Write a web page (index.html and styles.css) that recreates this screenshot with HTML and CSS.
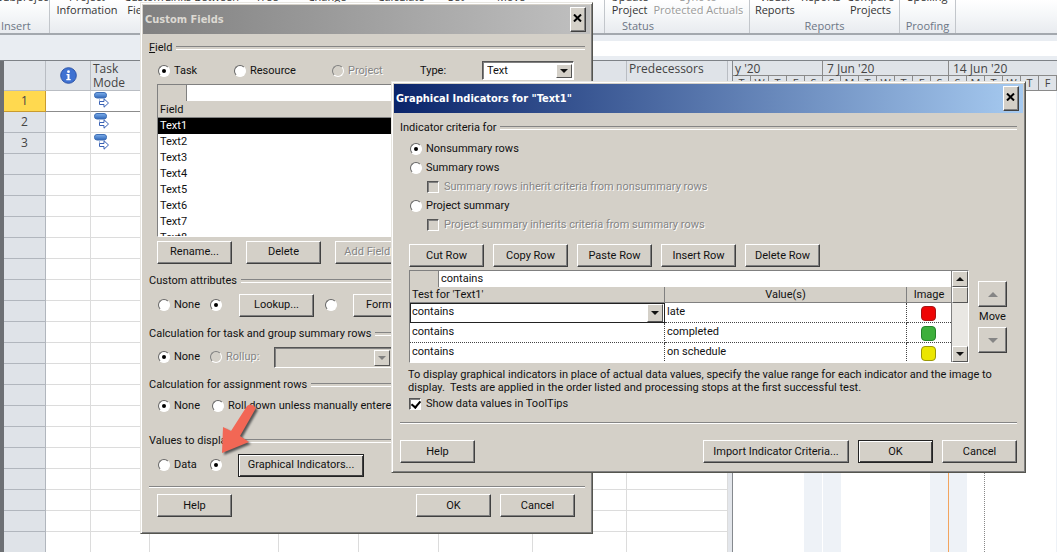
FILE: index.html
```html
<!DOCTYPE html>
<html lang="en">
<head>
<meta charset="utf-8">
<title>Project - Custom Fields</title>
<link rel="stylesheet" href="styles.css">
</head>
<body>
<svg class="defs" width="0" height="0" aria-hidden="true">
  <defs>
    <linearGradient id="pill" x1="0" y1="0" x2="0" y2="1"><stop offset="0" stop-color="#7fb0ec"/><stop offset="1" stop-color="#2f66b8"/></linearGradient>
    <symbol id="auto" viewBox="0 0 16 16">
      <rect x=".5" y=".5" width="12" height="5.500" rx="2.500" fill="url(#pill)" stroke="#3f6fb5"/>
      <path d="M5.500 7v4" fill="none" stroke="#a9bbdd"/>
      <path d="M5.500 9.500h4.500v-2.700l4.500 4.200-4.500 4.200v-2.700h-4.500z" fill="#fff" stroke="#3a62b5"/>
    </symbol>
    <symbol id="cross" viewBox="0 0 9 8"><path d="M1 .5L8 7.500M8 .5L1 7.500" fill="none" stroke="#000" stroke-width="2"/></symbol>
    <symbol id="down" viewBox="0 0 8 4"><path d="M0 0h8l-4 4z"/></symbol>
    <symbol id="up" viewBox="0 0 8 4"><path d="M0 4h8l-4-4z"/></symbol>
  </defs>
</svg>
<main class="app">
  <header class="ribbon">
    <section class="group insert"><div class="items"><span class="item">Subproject<br>&nbsp;</span></div><h2>Insert</h2></section>
    <section class="group properties">
      <div class="items">
        <span class="item w74">Project<br>Information</span><span class="item w36">Custom<br>Fields</span><span class="item w84">Links Between<br>Projects</span><span class="item w46">Tree</span><span class="item w74">Change</span><span class="item w74">Calculate</span><span class="item w36">Set</span><span class="item w74">Move</span>
      </div><h2>&nbsp;</h2>
    </section>
    <section class="group status"><div class="items"><span class="item">Update<br>Project</span><span class="item off">Sync to<br>Protected Actuals</span></div><h2>Status</h2></section>
    <section class="group reports"><div class="items"><span class="item">Visual<br>Reports</span><span class="item">Reports<br>&nbsp;</span><span class="item">Compare<br>Projects</span></div><h2>Reports</h2></section>
    <section class="group proofing"><div class="items"><span class="item">Spelling<br>&nbsp;</span></div><h2>Proofing</h2></section>
  </header>
  <div class="formula"><div class="formula-field"></div></div>
  <div class="view">
    <table class="sheet">
      <colgroup><col class="c-id"><col class="c-info"><col class="c-mode"><col class="c-name"><col class="c-dur"><col class="c-dur"><col class="c-date"><col class="c-date"><col class="c-pred"></colgroup>
      <thead><tr><th></th><th class="info"><svg width="17" height="17" viewBox="0 0 17 17" role="img" aria-label="Indicators"><circle cx="8.500" cy="8.500" r="7.800" fill="#3f72d2" stroke="#2e55a8"/><circle cx="8.500" cy="4.700" r="1.400" fill="#fff"/><path d="M6.500 7h3v5h1.200v1.200h-4.400v-1.200h1.200v-3.800h-1z" fill="#fff"/></svg></th><th>Task Mode</th><th></th><th></th><th></th><th></th><th></th><th>Predecessors</th></tr></thead>
      <tbody>
        <tr class="current"><th>1</th><td></td><td><svg width="16" height="16"><use href="#auto"/></svg></td><td></td><td></td><td></td><td></td><td></td><td></td></tr>
        <tr><th>2</th><td></td><td><svg width="16" height="16"><use href="#auto"/></svg></td><td></td><td></td><td></td><td></td><td></td><td></td></tr>
        <tr><th>3</th><td></td><td><svg width="16" height="16"><use href="#auto"/></svg></td><td></td><td></td><td></td><td></td><td></td><td></td></tr>
        <tr><th></th><td></td><td></td><td></td><td></td><td></td><td></td><td></td><td></td></tr>
        <tr><th></th><td></td><td></td><td></td><td></td><td></td><td></td><td></td><td></td></tr>
        <tr><th></th><td></td><td></td><td></td><td></td><td></td><td></td><td></td><td></td></tr>
        <tr><th></th><td></td><td></td><td></td><td></td><td></td><td></td><td></td><td></td></tr>
        <tr><th></th><td></td><td></td><td></td><td></td><td></td><td></td><td></td><td></td></tr>
        <tr><th></th><td></td><td></td><td></td><td></td><td></td><td></td><td></td><td></td></tr>
        <tr><th></th><td></td><td></td><td></td><td></td><td></td><td></td><td></td><td></td></tr>
        <tr><th></th><td></td><td></td><td></td><td></td><td></td><td></td><td></td><td></td></tr>
        <tr><th></th><td></td><td></td><td></td><td></td><td></td><td></td><td></td><td></td></tr>
        <tr><th></th><td></td><td></td><td></td><td></td><td></td><td></td><td></td><td></td></tr>
        <tr><th></th><td></td><td></td><td></td><td></td><td></td><td></td><td></td><td></td></tr>
        <tr><th></th><td></td><td></td><td></td><td></td><td></td><td></td><td></td><td></td></tr>
        <tr><th></th><td></td><td></td><td></td><td></td><td></td><td></td><td></td><td></td></tr>
        <tr><th></th><td></td><td></td><td></td><td></td><td></td><td></td><td></td><td></td></tr>
        <tr><th></th><td></td><td></td><td></td><td></td><td></td><td></td><td></td><td></td></tr>
        <tr><th></th><td></td><td></td><td></td><td></td><td></td><td></td><td></td><td></td></tr>
        <tr><th></th><td></td><td></td><td></td><td></td><td></td><td></td><td></td><td></td></tr>
        <tr><th></th><td></td><td></td><td></td><td></td><td></td><td></td><td></td><td></td></tr>
        <tr><th></th><td></td><td></td><td></td><td></td><td></td><td></td><td></td><td></td></tr>
      </tbody>
    </table>
    <div class="splitter"></div>
    <section class="gantt">
      <div class="weeks"><span class="part">y '20</span><span>7 Jun '20</span><span>14 Jun '20</span></div>
      <div class="days"><span>T</span><span>W</span><span>T</span><span>F</span><span>S</span><span>S</span><span>M</span><span>T</span><span>W</span><span>T</span><span>F</span><span>S</span><span>S</span><span>M</span><span>T</span><span>W</span><span>T</span><span>F</span></div>
      <div class="chart"><div class="start-line"></div><div class="today-line"></div></div>
    </section>
  </div>
</main>

<section class="dialog fields" aria-labelledby="t1">
  <div class="title"><h1 id="t1">Custom Fields</h1><button class="close" aria-label="Close"><svg width="9" height="8"><use href="#cross"/></svg></button></div>
  <div class="content">
    <h2 class="rule"><span><u>F</u>ield</span></h2>
    <div class="line types">
      <label class="w76"><input type="radio" name="kind" checked>Task</label>
      <label class="w98"><input type="radio" name="kind">Resource</label>
      <label class="w84 off"><input type="radio" name="kind" disabled>Project</label>
      <label class="type-label" for="type">Type:</label>
      <span class="combo type"><select id="type"><option>Text</option></select><i><svg width="8" height="4"><use href="#down"/></svg></i></span>
    </div>
    <div class="list">
      <div class="entry"><b></b><input type="text" aria-label="Field entry"></div>
      <div class="list-head">Field</div>
      <ul><li class="selected">Text1</li><li>Text2</li><li>Text3</li><li>Text4</li><li>Text5</li><li>Text6</li><li>Text7</li><li>Text8</li></ul>
    </div>
    <div class="line list-buttons"><button class="btn">Rename...</button><button class="btn">Delete</button><button class="btn wide" disabled>Add Field to Enterprise...</button></div>
    <h2 class="rule">Custom attributes</h2>
    <div class="line attributes"><label class="w52"><input type="radio" name="attr">None</label><input type="radio" name="attr" aria-label="Lookup" checked><button class="btn lookup">Lookup...</button><input type="radio" name="attr" aria-label="Formula"><button class="btn formula-button">Formula...</button></div>
    <h2 class="rule">Calculation for task and group summary rows</h2>
    <div class="line calc"><label class="w52"><input type="radio" name="calc" checked>None</label><label class="off w62"><input type="radio" name="calc" disabled>Rollup:</label><span class="combo rollup"><select aria-label="Rollup" disabled><option></option></select><i><svg width="8" height="4"><use href="#down"/></svg></i></span></div>
    <h2 class="rule">Calculation for assignment rows</h2>
    <div class="line assign"><label class="w52"><input type="radio" name="assign" checked>None</label><label><input type="radio" name="assign">Roll down unless manually entered</label></div>
    <h2 class="rule">Values to display</h2>
    <div class="line values"><label class="w52"><input type="radio" name="val">Data</label><input type="radio" name="val" aria-label="Graphical indicators" checked><button class="btn default indicators">Graphical Indicators...</button></div>
    <hr>
    <footer class="actions"><button class="btn">Help</button><span></span><button class="btn">OK</button><button class="btn">Cancel</button></footer>
  </div>
</section>

<section class="dialog graphical" aria-labelledby="t2">
  <div class="title"><h1 id="t2">Graphical Indicators for "Text1"</h1><button class="close" aria-label="Close"><svg width="9" height="8"><use href="#cross"/></svg></button></div>
  <div class="content">
    <h2 class="rule">Indicator criteria for</h2>
    <div class="criteria">
      <label><input type="radio" name="rows" checked>Nonsummary rows</label>
      <label><input type="radio" name="rows">Summary rows</label>
      <label class="off sub"><input type="checkbox" disabled>Summary rows inherit criteria from nonsummary rows</label>
      <label><input type="radio" name="rows">Project summary</label>
      <label class="off sub"><input type="checkbox" disabled>Project summary inherits criteria from summary rows</label>
    </div>
    <div class="row-buttons"><button class="btn">Cut Row</button><button class="btn">Copy Row</button><button class="btn">Paste Row</button><button class="btn">Insert Row</button><button class="btn">Delete Row</button></div>
    <div class="tests">
      <div class="grid">
        <div class="grid-main">
          <div class="entry"><b></b><input type="text" value="contains" aria-label="Cell value"></div>
          <table>
            <colgroup><col class="g-test"><col><col class="g-image"></colgroup>
            <thead><tr><th class="first">Test for 'Text1'</th><th>Value(s)</th><th>Image</th></tr></thead>
            <tbody>
              <tr><td class="active"><span class="combo cell"><select aria-label="Test"><option>contains</option></select><i><svg width="8" height="4"><use href="#down"/></svg></i></span></td><td>late</td><td class="image"><span class="dot red"></span></td></tr>
              <tr><td>contains</td><td>completed</td><td class="image"><span class="dot green"></span></td></tr>
              <tr><td>contains</td><td>on schedule</td><td class="image"><span class="dot yellow"></span></td></tr>
            </tbody>
          </table>
        </div>
        <div class="scroll"><button aria-label="Scroll up"><svg width="8" height="4"><use href="#up"/></svg></button><b class="thumb"></b><b class="track"></b><button aria-label="Scroll down"><svg width="8" height="4"><use href="#down"/></svg></button></div>
      </div>
      <div class="move"><button class="btn" disabled aria-label="Move up"><svg width="10" height="5"><use href="#up"/></svg></button><span>Move</span><button class="btn" disabled aria-label="Move down"><svg width="10" height="5"><use href="#down"/></svg></button></div>
    </div>
    <p>To display graphical indicators in place of actual data values, specify the value range for each indicator and the image to display.&nbsp; Tests are applied in the order listed and processing stops at the first successful test.</p>
    <label class="tooltips"><input type="checkbox" checked>Show data values in ToolTips</label>
    <hr>
    <footer class="actions"><button class="btn">Help</button><span></span><button class="btn import">Import Indicator Criteria...</button><button class="btn default">OK</button><button class="btn">Cancel</button></footer>
  </div>
</section>

<svg class="arrow" width="44" height="60" viewBox="0 0 44 60" aria-hidden="true"><path d="M4 53L5 27L13 31L29 6Q33 2 38 8L22 36L31 42Z"/></svg>
</body>
</html>
```
FILE: styles.css
```css
* { box-sizing: border-box; }
body { margin: 0; height: 100vh; overflow: hidden; position: relative; background: #fff; color: #111; font: 11px/14px Roboto, "DejaVu Sans Condensed", sans-serif; }
h1, h2, p, ul { margin: 0; padding: 0; font: inherit; list-style: none; }
svg { display: block; }
button, input, select { font: inherit; color: inherit; margin: 0; }
.defs { position: absolute; }

.app { height: 100%; display: flex; flex-direction: column; font: 12px/15px "Open Sans", "Noto Sans", sans-serif; color: #444; }
.ribbon { flex: none; height: 35px; display: flex; overflow: hidden; font-size: 11px; background: linear-gradient(#fff, #f4f6f8 50%, #e8ebef); border-bottom: 2px solid #a3a8ae; }
.group { flex: none; display: flex; flex-direction: column; justify-content: flex-end; border-right: 1px solid #c2c6cb; overflow: hidden; }
.group h2 { color: #6c7685; line-height: 15px; padding-top: 2px; text-align: center; }
.items { display: flex; justify-content: center; white-space: nowrap; text-align: center; color: #333; }
.item { flex: none; line-height: 13px; min-height: 26px; }
.item.off, .off { color: #9a9a9a; }
.insert { width: 50px; }
.insert h2 { text-align: left; padding-left: 1px; }
.properties { width: 555px; }
.properties .items { justify-content: flex-start; }
.status { width: 145px; }
.status .items { gap: 5px; }
.status h2 { padding-right: 78px; }
.reports { width: 150px; }
.reports .items { gap: 6px; }
.proofing { width: 56px; }
.w36 { width: 36px; } .w46 { width: 46px; } .w52 { width: 52px; } .w62 { width: 62px; } .w74 { width: 74px; } .w76 { width: 76px; } .w84 { width: 84px; } .w98 { width: 98px; }
.formula { flex: none; height: 25px; padding: 6px 0 4px 590px; background: #e9edf2; }
.formula-field { height: 15px; background: #fff; }
.view { flex: 1; min-height: 0; display: flex; overflow: hidden; border-top: 1px solid #7e8287; }
.sheet { flex: none; width: 728px; border-left: 4px solid #6d7074; border-collapse: separate; border-spacing: 0; table-layout: fixed; align-self: flex-start; }
.c-id { width: 42px; } .c-info { width: 45px; } .c-mode { width: 59px; } .c-name { width: 129px; } .c-dur { width: 80px; } .c-date { width: 94px; } .c-pred { width: 101px; }
.sheet th, .sheet td { height: 21px; padding: 0; border: solid #dcdcdc; border-width: 0 1px 1px 0; font-weight: normal; }
.sheet td { padding: 0 3px 3px; }
.sheet tbody th { background: #dfe3e8; border-color: #b1b6bd; line-height: 18px; }
.sheet thead th { height: 30px; padding: 1px 2px 0; text-align: left; vertical-align: top; line-height: 14px; background: #dfe3e8; border-color: #b9bdc3; border-bottom: 0; box-shadow: inset 0 -1px #b9bdc3; }
.sheet thead .info { padding: 6px 0 0 14px; }
.sheet .current th { background: #ffd94f; border-color: #c99b2e; }
.sheet .current td { border-bottom-color: #8c8c8c; }
.splitter { flex: none; width: 5px; background: #e3e6eb; border-right: 1px solid #85898e; }
.gantt { flex: 1; min-width: 0; display: flex; flex-direction: column; overflow: hidden; }
.weeks, .days { display: flex; flex: none; height: 15px; background: #dfe3e8; border-bottom: 1px solid #8a8a8a; }
.weeks span { flex: none; width: 126px; padding-left: 4px; border-right: 1px solid #8a8a8a; line-height: 15px; }
.weeks .part { width: 90px; padding-left: 2px; }
.days span { flex: none; width: 18px; border-right: 1px solid #8a8a8a; text-align: center; line-height: 14px; }
.days { font-size: 11px; }
.chart { flex: 1; position: relative; background: repeating-linear-gradient(90deg, #eef2f7 0 18px, #fff 18px 19px, #eef2f7 19px 37px, #fff 37px 126px) 71px 0 / 126px 100%; }
.today-line { position: absolute; top: 0; bottom: 0; left: 215px; width: 1px; background: #f2a45e; }
.start-line { position: absolute; top: 0; bottom: 0; left: 251px; border-left: 1px dotted #888; }

.dialog { position: absolute; background: #d4d0c8; border: 1px solid; border-color: #e8e6e1 #55554f #55554f #e8e6e1; box-shadow: inset 1px 1px #fff, inset -1px -1px #808080; padding: 2px; }
.fields { left: 140px; top: 2px; width: 453px; height: 532px; }
.graphical { left: 391px; top: 81px; width: 635px; height: 392px; }
.title { height: 29px; display: flex; align-items: center; justify-content: space-between; padding: 0 4px 0 2px; }
.fields .title { background: linear-gradient(90deg, #808080, #c0c0c0); color: #dcd9d2; }
.graphical .title { background: linear-gradient(90deg, #0a246a, #a6caf0); color: #fff; }
.title h1 { font-family: "DejaVu Sans Condensed", "DejaVu Sans", sans-serif; font-weight: bold; }
.btn, .close { background: #d4d0c8; border: 1px solid; border-color: #fff #404040 #404040 #fff; box-shadow: inset -1px -1px #808080; border-radius: 0; }
.close { width: 16px; height: 25px; padding: 0 1px 3px 0; display: grid; place-items: center; color: #000; }
.btn { width: 75px; height: 23px; padding: 0; white-space: nowrap; flex: none; }
.btn:disabled, .off { color: #858585; text-shadow: 1px 1px #fff; }
.btn.default { border: 1px solid #222; box-shadow: inset 1px 1px #fff, inset -1px -1px #404040; }
.rule { display: flex; align-items: center; gap: 4px; line-height: 14px; }
.rule::after { content: ""; flex: 1; height: 2px; border-top: 1px solid #858585; border-bottom: 1px solid #fff; }
hr { height: 2px; margin: 0; border: solid; border-width: 1px 0; border-color: #858585 transparent #fff; }
label { display: flex; align-items: center; white-space: nowrap; flex: none; }
input[type=radio] { appearance: none; flex: none; width: 12px; height: 12px; border: 1px solid; border-color: #666 #fff #fff #666; border-radius: 50%; background: #fff; display: grid; place-items: center; margin-right: 4px; }
input[type=radio]:disabled { background: #d4d0c8; border-color: #808080 #fff #fff #808080; }
input[type=radio]:checked::before { content: ""; width: 4px; height: 4px; border-radius: 50%; background: #000; }
input[type=checkbox] { appearance: none; flex: none; width: 12px; height: 12px; border: 1px solid; border-color: #555 #fff #fff #555; box-shadow: inset 1px 1px #808080; background: #fff; margin-right: 5px; }
input[type=checkbox]:disabled { background: #d4d0c8; }
input[type=checkbox]:checked::before { content: ""; display: block; width: 4px; height: 7px; margin: 0 0 0 3px; border: solid #000; border-width: 0 2px 2px 0; transform: rotate(40deg); }
.line { display: flex; align-items: center; }
.combo { display: flex; height: 20px; border: 1px solid; border-color: #555 #fff #fff #555; box-shadow: inset 1px 1px #808080; background: #fff; padding: 2px 1px 1px 2px; }
.combo select { appearance: none; flex: 1; min-width: 0; border: 0; background: transparent; padding: 0 2px; outline: 0; }
.combo i { width: 16px; flex: none; display: grid; place-items: center; background: #d4d0c8; border: 1px solid; border-color: #fff #555 #555 #fff; }
.entry { display: flex; height: 16px; background: #fff; }
.entry b { width: 29px; background: #d4d0c8; border-right: 1px solid #808080; }
.entry input { flex: 1; border: 0; background: transparent; padding: 0 2px; min-width: 0; outline: 0; }
.actions { display: flex; gap: 9px; }
.actions span { flex: 1; }

.fields .content { padding: 7px 5px 0 6px; }
.fields .line { padding-left: 9px; }
.fields .types { height: 21px; margin: 5px 0 3px; }
.type-label { width: 62px; margin-left: 4px; }
.type { width: 92px; height: 19px; }
.list { margin: 0 8px; height: 153px; overflow: hidden; border: 1px solid; border-color: #808080 #fff #fff #808080; }
.list-head { height: 16px; padding-left: 2px; line-height: 17px; }
.list ul { background: #fff; border-top: 1px solid #808080; }
.list li { height: 16px; line-height: 16px; padding-left: 2px; }
.list .selected { background: #000; color: #fff; }
.fields .list-buttons { padding-left: 8px; height: 24px; margin: 3px 0 10px; gap: 14px; }
.list-buttons .wide { width: 138px; }
.attributes { height: 24px; margin: 5px 0 10px; }
.lookup { margin: 0 11px 0 13px; }
.formula-button { margin-left: 12px; }
.calc { height: 22px; margin: 5px 0 10px; }
.rollup { width: 118px; height: 21px; background: #d4d0c8; color: #808080; margin-left: 2px; }
.assign { height: 14px; margin: 7px 0 21px; }
.assign label + label { padding-left: 2px; }
.values { height: 24px; margin: 5px 0 9px; }
.indicators { width: 126px; margin-left: 12px; }
.fields .actions { padding: 6px 10px 0 8px; }

.graphical .content { padding: 8px 6px 0; }
.criteria { display: flex; flex-direction: column; gap: 5px; padding: 7px 0 0 10px; }
.criteria .sub { padding-left: 17px; }
.row-buttons { display: flex; gap: 9px; padding: 12px 9px 3px; }
.tests { display: flex; padding: 0 10px 0 9px; gap: 9px; }
.grid { flex: 1; min-width: 0; height: 93px; display: flex; border: 1px solid; border-color: #808080 #fff #fff #808080; background: #fff; overflow: hidden; }
.grid-main { flex: 1; min-width: 0; }
.grid table { width: 100%; table-layout: fixed; border-collapse: separate; border-spacing: 0; }
.g-test { width: 255px; } .g-image { width: 44px; }
.grid th { height: 16px; padding: 0; background: #d4d0c8; font-weight: normal; border: solid #808080; border-width: 0 1px 1px 0; }
.grid th.first { text-align: left; padding-left: 2px; }
.grid td { height: 20px; padding: 0 2px 2px; border: dotted #444; border-width: 0 1px 1px 0; line-height: 16px; }
.grid td.active { padding: 0; border: 1px solid #222; }
.grid th:last-child, .grid td:last-child { border-right: 0; }
.cell { height: 18px; box-shadow: none; border: 0; padding: 0 1px; }
.cell select { padding: 0 0 2px; }
.grid td.image { padding: 0 2px 0 0; }
.dot { display: block; width: 15px; height: 15px; margin: 2px auto 0; border-radius: 4px; border: 1px solid; }
.red { background: #ee0505; border-color: #a51515; }
.green { background: #3daf3b; border-color: #25832a; }
.yellow { background: #ebe600; border-color: #9a9709; }
.scroll { width: 17px; display: flex; flex-direction: column; border-left: 1px solid #808080; }
.scroll button, .thumb { height: 16px; flex: none; padding: 0; display: grid; place-items: center; background: #d4d0c8; border: 1px solid; border-color: #fff #555 #555 #fff; border-radius: 0; }
.track { flex: 1; background: #e9e7e3; }
.move { width: 29px; display: flex; flex-direction: column; align-items: center; justify-content: space-between; padding: 11px 0 10px; }
.move .btn { width: 29px; height: 26px; display: grid; place-items: center; }
.graphical p { padding: 5px 9px 0 8px; line-height: 13px; }
.tooltips { margin: 3px 0 11px 9px; }
.graphical .actions { padding-top: 16px; }
.import { width: 146px; }
svg { fill: currentColor; }
.arrow { position: absolute; left: 218px; top: 400px; fill: #f26755; filter: drop-shadow(2px 2px 1px #555); }
```
